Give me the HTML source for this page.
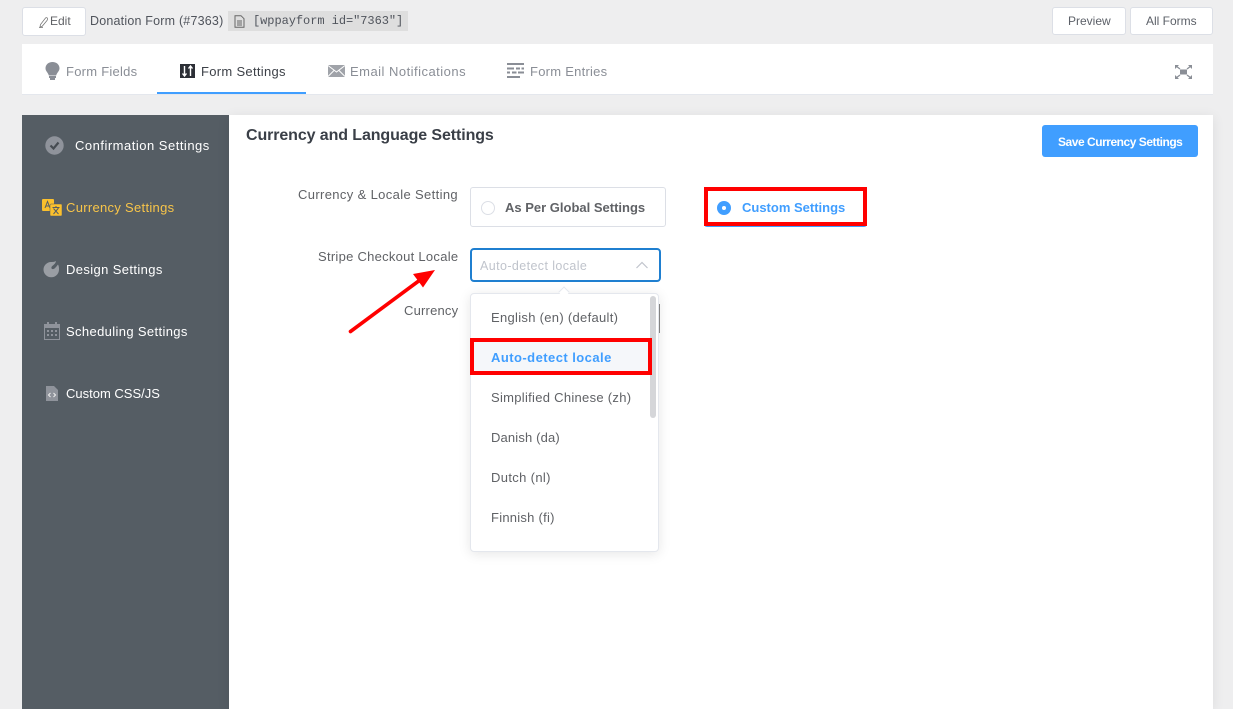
<!DOCTYPE html>
<html><head><meta charset="utf-8"><style>
html,body{margin:0;padding:0}
body{width:1233px;height:709px;overflow:hidden;background:#eeeeef;position:relative;font-family:"Liberation Sans",sans-serif;font-size:13px;color:#606266}
.a{position:absolute}
.t{position:absolute;white-space:nowrap;line-height:18px}
.btn{position:absolute;background:#fff;border:1px solid #dcdfe6;border-radius:3px;box-sizing:border-box}
.g{color:#8a8e96}
.s{color:#fff}
svg{position:absolute;overflow:visible}
</style></head><body>

<div class="btn" style="left:22px;top:7px;width:64px;height:29px"></div>
<svg style="left:39px;top:16px" width="11" height="12" viewBox="0 0 11 12"><path d="M3 10.5 L1 11 L1.5 8.5 L6.5 2 Q8 1 8.5 2.5 Q8.7 3.5 8 4.5 Z M0 11.5 H4" fill="none" stroke="#777" stroke-width=".8"/></svg>
<div class="t" style="left:50px;top:12px;font-size:12px;color:#606266">Edit</div>
<div class="t" style="left:90px;top:12px;font-size:12.5px;letter-spacing:.2px;color:#50545c">Donation Form (#7363)</div>
<div class="a" style="left:228px;top:11px;width:180px;height:20px;background:#dedede"></div>
<svg style="left:234px;top:15px" width="11" height="13" viewBox="0 0 11 13"><path d="M1 .7H7L10 3.700V12.300H1Z M3 6H8 M3 8H8 M3 10H8" fill="none" stroke="#666" stroke-width="1"/></svg>
<div class="t" style="left:253px;top:12px;font-family:'Liberation Mono',monospace;font-size:12px;letter-spacing:-.05px;color:#50545c">[wppayform id="7363"]</div>

<div class="btn" style="left:1052px;top:7px;width:74px;height:28px"></div>
<div class="t" style="left:1068px;top:12px;font-size:12px;color:#5c6068">Preview</div>
<div class="btn" style="left:1130px;top:7px;width:83px;height:28px"></div>
<div class="t" style="left:1146px;top:12px;font-size:12px;color:#5c6068">All Forms</div>

<div class="a" style="left:22px;top:44px;width:1191px;height:50px;background:#fff;border-bottom:1px solid #e4e7ed"></div>
<svg style="left:45px;top:62px" width="15" height="18" viewBox="0 0 15 18"><path d="M7.5 0C3.5 0 .5 2.700 .5 6.300c0 3 2.500 4.200 3.300 7.200h7.400c.8-3 3.300-4.200 3.300-7.200C14.500 2.700 11.500 0 7.500 0Z" fill="#8a8e96"/><rect x="4" y="14" width="7" height="2" fill="#8a8e96"/><rect x="5" y="16" width="5" height="2" fill="#8a8e96"/></svg>
<div class="t g" style="left:66px;top:63px;font-size:13px;letter-spacing:.25px">Form Fields</div>

<div class="a" style="left:180px;top:64px;width:15px;height:14px;background:#2c2f36"></div>
<svg style="left:180px;top:64px" width="15" height="14" viewBox="0 0 15 14"><path d="M4.500 2V12 M2.500 9.500L4.500 12L6.500 9.500 M10.500 12V2 M8.500 4.500L10.500 2L12.500 4.500" fill="none" stroke="#fff" stroke-width="1.400"/></svg>
<div class="t" style="left:201px;top:63px;font-size:13px;letter-spacing:.3px;color:#3d4148">Form Settings</div>
<div class="a" style="left:157px;top:92px;width:149px;height:2px;background:#409eff"></div>

<svg style="left:328px;top:65px" width="17" height="12" viewBox="0 0 17 12"><rect width="17" height="12" fill="#a0a3a9"/><path d="M0 .5L8.500 7L17 .5 M0 11.500L6 5.500 M17 11.500L11 5.500" fill="none" stroke="#fff" stroke-width="1"/></svg>
<div class="t g" style="left:350px;top:63px;font-size:13px;letter-spacing:.48px">Email Notifications</div>

<svg style="left:507px;top:63px" width="17" height="15" viewBox="0 0 17 15"><path d="M0 1H17 M0 5.500H7 M9 5.500H13 M14.500 5.500H17 M0 9.500H3 M5 9.500H9.500 M11 9.500H17 M0 14H13" fill="none" stroke="#8a8e96" stroke-width="1.900"/></svg>
<div class="t g" style="left:530px;top:63px;font-size:13px;letter-spacing:.25px">Form Entries</div>

<svg style="left:1175px;top:65px" width="17" height="14" viewBox="0 0 17 14"><rect x="5" y="4.500" width="7" height="5" fill="#8a8e96"/><path d="M1 1L5 4 M16 1L12 4 M1 13L5 10 M16 13L12 10" stroke="#8a8e96" stroke-width="1.300" fill="none"/><path d="M0 0H4L0 4Z M17 0H13L17 4Z M0 14H4L0 10Z M17 14H13L17 10Z" fill="#8a8e96"/></svg>

<div class="a" style="left:22px;top:115px;width:207px;height:594px;background:#555d64"></div>
<div class="a" style="left:229px;top:115px;width:984px;height:594px;background:#fff;box-shadow:0 2px 12px rgba(0,0,0,.08)"></div>

<svg style="left:45px;top:136px" width="19" height="19" viewBox="0 0 19 19"><circle cx="9.500" cy="9.500" r="9.200" fill="#8f939b"/><path d="M5.500 9.500L8.500 12.500L13.500 6.500" fill="none" stroke="#464c52" stroke-width="2.200"/></svg>
<div class="t s" style="left:75px;top:137px;font-size:13px;letter-spacing:.5px">Confirmation Settings</div>

<svg style="left:42px;top:199px" width="20" height="17" viewBox="0 0 20 17"><rect width="12" height="12" rx="1" fill="#fbc02d"/><path d="M3 9L5.500 2.500L8 9 M4 7H7" fill="none" stroke="#555d64" stroke-width="1"/><rect x="8" y="5" width="12" height="12" rx="1" fill="#fbc02d" stroke="#555d64" stroke-width=".5"/><path d="M10.500 8.500H17.500 M14 7V8.500 M11.500 15L16.500 9 M11.500 9.500L16.500 15" fill="none" stroke="#555d64" stroke-width="1"/></svg>
<div class="t" style="left:66px;top:199px;font-size:13px;letter-spacing:.3px;color:#f8c549">Currency Settings</div>

<svg style="left:43px;top:261px" width="16" height="16" viewBox="0 0 16 16"><path d="M8 1C11 1 12 .5 13 0C12.500 2 12 2.500 11 3.500C10 4.500 9.500 4.500 8.500 6C8 7.500 9 8.500 10.500 8C12 7.500 13 6 15 3.500C16 5 16 7 16 8.500A7.700 7.700 0 0 1 .5 8.500C.5 4.500 4 1 8 1Z" fill="#9a9ea4"/></svg>
<div class="t s" style="left:66px;top:261px;font-size:13px;letter-spacing:.38px">Design Settings</div>

<svg style="left:44px;top:322px" width="16" height="18" viewBox="0 0 16 18"><rect x=".5" y="2.500" width="15" height="15" fill="none" stroke="#8f939b"/><rect x="0" y="2" width="16" height="4" fill="#8f939b"/><rect x="3" y="0" width="2" height="4" fill="#8f939b"/><rect x="11" y="0" width="2" height="4" fill="#8f939b"/><path d="M3 8h2v2H3zM7 8h2v2H7zM11 8h2v2h-2zM3 12h2v2H3zM7 12h2v2H7zM11 12h2v2h-2z" fill="#8f939b"/></svg>
<div class="t s" style="left:66px;top:323px;font-size:13px;letter-spacing:.36px">Scheduling Settings</div>

<svg style="left:46px;top:386px" width="12" height="15" viewBox="0 0 12 15"><path d="M0 0H8L12 4V15H0Z" fill="#8f939b"/><path d="M4.500 7L2.500 9L4.500 11 M7.500 7L9.500 9L7.500 11" fill="none" stroke="#eee" stroke-width="1"/></svg>
<div class="t s" style="left:66px;top:385px;font-size:13px;letter-spacing:0">Custom CSS/JS</div>

<div class="t" style="left:246px;top:126px;font-size:16px;font-weight:700;letter-spacing:-.1px;color:#3a3f47;line-height:20px">Currency and Language Settings</div>
<div class="a" style="left:1042px;top:125px;width:156px;height:32px;background:#409eff;border-radius:3px"></div>
<div class="t" style="left:1058px;top:133px;font-size:12px;font-weight:700;color:#fff;letter-spacing:-.47px">Save Currency Settings</div>

<div class="t" style="left:298px;top:186px;font-size:13px;letter-spacing:.36px;color:#606266">Currency &amp; Locale Setting</div>
<div class="btn" style="left:470px;top:187px;width:196px;height:40px"></div>
<div class="a" style="left:481px;top:201px;width:14px;height:14px;border:1px solid #dcdfe6;border-radius:50%;box-sizing:border-box"></div>
<div class="t" style="left:505px;top:199px;font-size:13px;font-weight:700;color:#606266">As Per Global Settings</div>

<div class="a" style="left:704px;top:187px;width:163px;height:40px;background:#409eff;border-radius:0 0 3px 3px"></div>
<div class="a" style="left:704px;top:187px;width:163px;height:39px;background:#fff;border:4px solid #f00;box-sizing:border-box"></div>
<div class="a" style="left:717px;top:201px;width:14px;height:14px;background:#409eff;border-radius:50%"></div>
<div class="a" style="left:722px;top:206px;width:4px;height:4px;background:#fff;border-radius:50%"></div>
<div class="t" style="left:742px;top:199px;font-size:13px;font-weight:700;color:#409eff">Custom Settings</div>

<div class="t" style="left:318px;top:248px;font-size:13px;letter-spacing:.27px;color:#606266">Stripe Checkout Locale</div>
<div class="a" style="left:470px;top:248px;width:191px;height:34px;border:2px solid #1f7fd0;border-radius:4px;box-sizing:border-box"></div>
<div class="t" style="left:480px;top:257px;font-size:12.5px;letter-spacing:.4px;color:#c0c4cc">Auto-detect locale</div>
<svg style="left:636px;top:261px" width="12" height="8" viewBox="0 0 12 8"><path d="M.5 7L6 1.500L11.500 7" fill="none" stroke="#c0c4cc" stroke-width="1.200"/></svg>

<div class="t" style="left:404px;top:302px;font-size:13px;letter-spacing:.2px;color:#606266">Currency</div>
<div class="a" style="left:658px;top:304px;width:2px;height:29px;background:#888"></div>

<div class="a" style="left:470px;top:293px;width:189px;height:259px;background:#fff;border:1px solid #e4e7ed;border-radius:4px;box-sizing:border-box;box-shadow:0 2px 12px rgba(0,0,0,.1)"></div>
<div class="a" style="left:560px;top:288px;width:8px;height:8px;background:#fff;border-left:1px solid #e4e7ed;border-top:1px solid #e4e7ed;transform:rotate(45deg);box-sizing:border-box"></div>
<div class="a" style="left:650px;top:296px;width:6px;height:122px;background:#d5d6d9;border-radius:3px"></div>

<div class="t" style="left:491px;top:309px;font-size:13px;letter-spacing:.3px;color:#606266">English (en) (default)</div>
<div class="a" style="left:470px;top:338px;width:182px;height:37px;background:#f5f7fa;border:4px solid #f00;box-sizing:border-box"></div>
<div class="t" style="left:491px;top:349px;font-size:13px;font-weight:700;letter-spacing:.45px;color:#409eff">Auto-detect locale</div>
<div class="t" style="left:491px;top:389px;font-size:13px;letter-spacing:.29px;color:#606266">Simplified Chinese (zh)</div>
<div class="t" style="left:491px;top:429px;font-size:13px;letter-spacing:.15px;color:#606266">Danish (da)</div>
<div class="t" style="left:491px;top:469px;font-size:13px;letter-spacing:.35px;color:#606266">Dutch (nl)</div>
<div class="t" style="left:491px;top:509px;font-size:13px;letter-spacing:.25px;color:#606266">Finnish (fi)</div>

<svg style="left:340px;top:260px" width="110" height="80" viewBox="0 0 110 80"><path d="M10.500 71.500L80 20" stroke="#f00" stroke-width="3.600" stroke-linecap="round" fill="none"/><path d="M95 10L73 14L83 27.500Z" fill="#f00"/></svg>

</body></html>
